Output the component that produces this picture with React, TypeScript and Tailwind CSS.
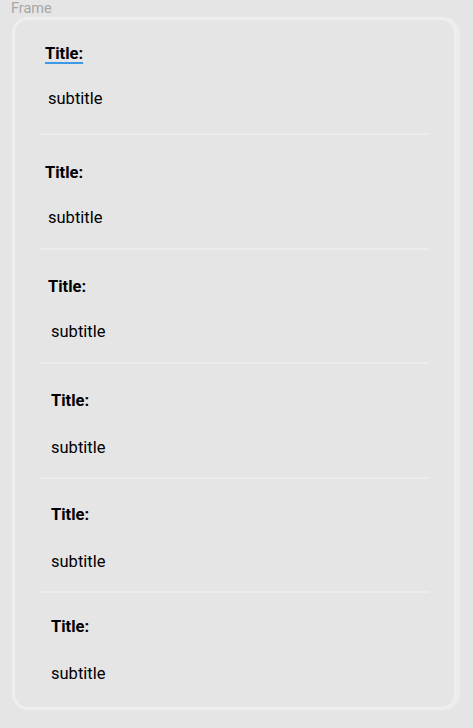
const rows = [
  { pt: 'pt-[22px]', title: 'pl-[30px]', sub: 'pl-[33px]', gap: 'mt-[23px]', pb: 'pb-[24px]', underline: true },
  { pt: 'pt-[26px]', title: 'pl-[30px]', sub: 'pl-[33px]', gap: 'mt-[23px]', pb: 'pb-[20px]', underline: false },
  { pt: 'pt-[25px]', title: 'pl-[33px]', sub: 'pl-[36px]', gap: 'mt-[23px]', pb: 'pb-[20px]', underline: false },
  { pt: 'pt-[25px]', title: 'pl-[36px]', sub: 'pl-[36px]', gap: 'mt-[25px]', pb: 'pb-[19px]', underline: false },
  { pt: 'pt-[24px]', title: 'pl-[36px]', sub: 'pl-[36px]', gap: 'mt-[25px]', pb: 'pb-[19px]', underline: false },
  { pt: 'pt-[22px]', title: 'pl-[36px]', sub: 'pl-[36px]', gap: 'mt-[25px]', pb: 'pb-[0px]', underline: false },
];

export default function App() {
  return (
    <div className="min-h-[728px] w-[473px] bg-[#e5e5e5] font-['Roboto',sans-serif] text-black">
      <div className="pl-[11px] text-[14.5px] leading-[17px] text-[#a6a6a6]">Frame</div>
      <div className="ml-[12px] h-[693px] w-[445px] rounded-[16px] border-[3px] border-[#eeeeee] bg-[#e5e5e5] shadow-[3px_0_0_0_#ececec]">
        <div className="flex flex-col">
          {rows.map((row, i) => (
            <div key={i} className="flex flex-col">
              <div className={`${row.pt} ${row.pb} flex flex-col`}>
                <div className={row.title}>
                  <span
                    className={
                      row.underline
                        ? 'text-[16.5px] font-bold leading-[20px] underline decoration-[#3b9ae8] decoration-2 underline-offset-[3px]'
                        : 'text-[16.5px] font-bold leading-[20px]'
                    }
                  >
                    Title:
                  </span>
                </div>
                <div className={`${row.sub} ${row.gap} text-[16.5px] leading-[20px]`}>subtitle</div>
              </div>
              {i < rows.length - 1 ? (
                <div className="ml-[25px] h-[2px] w-[389px] bg-[#ececec]" />
              ) : null}
            </div>
          ))}
        </div>
      </div>
    </div>
  );
}
